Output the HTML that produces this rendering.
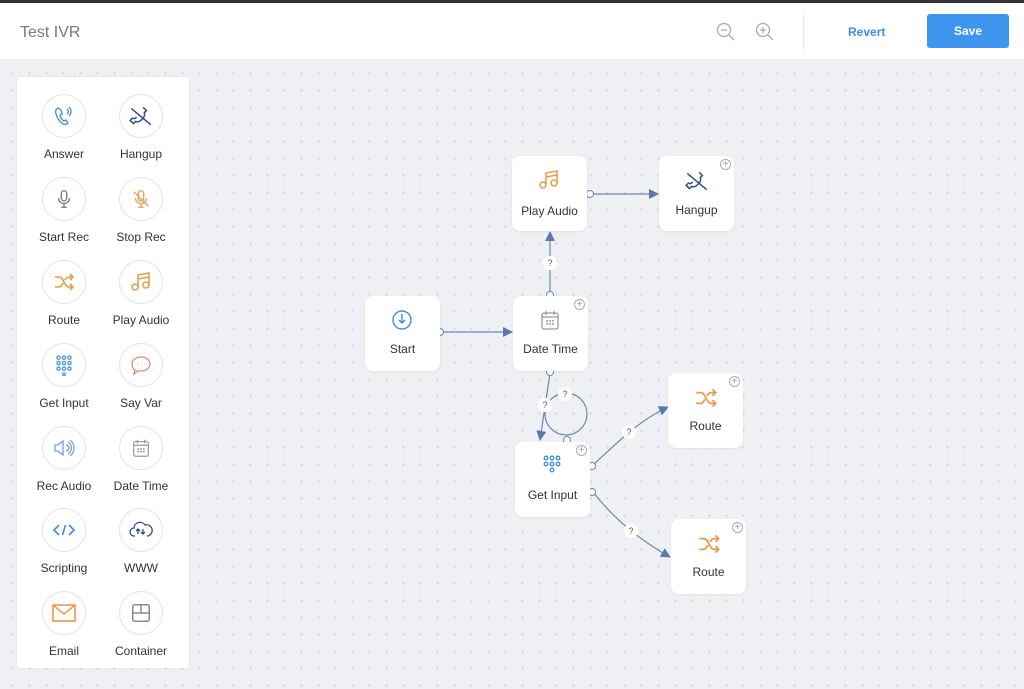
<!DOCTYPE html>
<html><head><meta charset="utf-8"><style>
*{box-sizing:border-box;margin:0;padding:0}
body{width:1024px;height:689px;overflow:hidden;font-family:"Liberation Sans",sans-serif;background:#eef0f3;position:relative}
.topbar{position:absolute;left:0;top:0;width:1024px;height:3px;background:#333}
.hdr{position:absolute;left:0;top:3px;width:1024px;height:56px;background:#fff}
.title{position:absolute;left:20px;top:21px;font-size:16px;color:#6b7a90}
.canvas{position:absolute;left:0;top:59px;width:1024px;height:630px;background-color:#eef0f3;background-image:radial-gradient(#d3d6dc 1px,transparent 1.4px);background-size:17px 17px;background-position:4px 6px}
.side{position:absolute;left:17px;top:77px;width:172px;height:591px;background:#fff;border-radius:3px;box-shadow:0 0 2px rgba(0,0,0,.08)}
.it{position:absolute;width:80px;text-align:center;font-size:12px;color:#333}
.it .c{width:44px;height:44px;border:1px solid #e3e3e3;border-radius:50%;margin:0 auto 9px;display:flex;align-items:center;justify-content:center}
.node{position:absolute;width:75px;height:75px;background:#fff;border-radius:8px;box-shadow:0 1px 3px rgba(0,0,0,.06);text-align:center;font-size:12px;color:#333}
.node svg.ic{position:absolute;left:25px;top:12px}
.node .l{position:absolute;left:0;right:0;top:46px}
.plus{position:absolute;right:3px;top:3px;width:11px;height:11px;border:1px solid #aaa;border-radius:50%;color:#999;font-size:10px;line-height:9px;text-align:center}
.btn{position:absolute;left:927px;top:14px;width:82px;height:34px;background:#3d95f0;border-radius:3px;color:#fff;font-size:12px;text-align:center;line-height:34px;font-weight:bold}
</style></head><body>
<div class="topbar"></div>
<div class="hdr">
<div class="title">Test IVR</div>
<svg style="position:absolute;left:716px;top:19px" width="20" height="20" viewBox="0 0 20 20" fill="none" stroke="#aaa" stroke-width="1.3"><circle cx="8" cy="8" r="6.5"/><path d="M5 8h6M13 13l5 5"/></svg>
<svg style="position:absolute;left:755px;top:19px" width="20" height="20" viewBox="0 0 20 20" fill="none" stroke="#aaa" stroke-width="1.3"><circle cx="8" cy="8" r="6.5"/><path d="M5 8h6M8 5v6M13 13l5 5"/></svg>
<div style="position:absolute;left:803px;top:11px;width:1px;height:36px;background:#e5e5e5"></div>
<div style="position:absolute;left:848px;top:22px;font-size:12px;color:#3d8fe0;font-weight:bold">Revert</div>
<div class="btn" style="top:11px">Save</div>
</div>
<div class="canvas"></div>

<div class="side">
<div class="it" style="left:7px;top:17px"><div class="c"><svg width="24" height="24" viewBox="0 0 24 24" fill="none" stroke="#3d8fe0" stroke-width="1.3"><path d="M6 4c-2 1-3 3-2 6 1 4 4 8 7 10 2 1 4 0 5-1l-2-3-2 1c-2-1-4-4-4-6l2-1-1-4z"/><path d="M15 5a3 3 0 0 1 0 5M17 3a6 6 0 0 1 0 9"/></svg></div>Answer</div>
<div class="it" style="left:84px;top:17px"><div class="c"><svg width="26" height="26" viewBox="0 0 24 24" fill="none" stroke="#2c4f8c" stroke-width="1.4"><path d="M14 4l3 3-2 2c1 2 0 4-2 6-2 2-4 3-6 2l-2 2-3-3 2-2c2 1 3 0 4-1"/><path d="M3 5l18 15"/></svg></div>Hangup</div>
<div class="it" style="left:7px;top:100px"><div class="c"><svg width="22" height="22" viewBox="0 0 24 24" fill="none" stroke="#6b7a90" stroke-width="1.4"><rect x="9" y="3" width="6" height="11" rx="3"/><path d="M6 11a6 6 0 0 0 12 0M12 17v4M9 21h6"/></svg></div>Start Rec</div>
<div class="it" style="left:84px;top:100px"><div class="c"><svg width="22" height="22" viewBox="0 0 24 24" fill="none" stroke="#e99a4a" stroke-width="1.4"><rect x="9" y="3" width="6" height="11" rx="3"/><path d="M6 11a6 6 0 0 0 12 0M12 17v4M9 21h6M4 4l16 16"/></svg></div>Stop Rec</div>
<div class="it" style="left:7px;top:183px"><div class="c"><svg width="24" height="24" viewBox="0 0 24 24" fill="none" stroke="#e99a4a" stroke-width="1.6"><path d="M3 7h4c5 0 5 10 10 10h3M3 17h4c2 0 3-2 4-4M13 10c1-2 2-3 4-3h3M18 4l3 3-3 3M18 14l3 3-3 3"/></svg></div>Route</div>
<div class="it" style="left:84px;top:183px"><div class="c"><svg width="24" height="24" viewBox="0 0 24 24" fill="none" stroke="#e99a4a" stroke-width="1.5"><path d="M9 17V5l11-2v12M9 9l11-2"/><circle cx="6" cy="17" r="3"/><circle cx="17" cy="15" r="3"/></svg></div>Play Audio</div>
<div class="it" style="left:7px;top:266px"><div class="c"><svg width="22" height="22" viewBox="0 0 24 24" fill="none" stroke="#3d8fe0" stroke-width="1.3"><circle cx="6" cy="4" r="1.8"/><circle cx="12" cy="4" r="1.8"/><circle cx="18" cy="4" r="1.8"/><circle cx="6" cy="10" r="1.8"/><circle cx="12" cy="10" r="1.8"/><circle cx="18" cy="10" r="1.8"/><circle cx="6" cy="16" r="1.8"/><circle cx="12" cy="16" r="1.8"/><circle cx="18" cy="16" r="1.8"/><circle cx="12" cy="22" r="1.5"/></svg></div>Get Input</div>
<div class="it" style="left:84px;top:266px"><div class="c"><svg width="24" height="24" viewBox="0 0 24 24" fill="none" stroke="#e8867a" stroke-width="1.3"><path d="M12 4c5 0 9 3 9 7s-4 7-9 7c-1 0-2 0-3-.3L5 21l1-4c-2-1-3-3-3-6 0-4 4-7 9-7z"/><path d="M8 11h.5M12 11h.5M16 11h.5"/></svg></div>Say Var</div>
<div class="it" style="left:7px;top:349px"><div class="c"><svg width="24" height="24" viewBox="0 0 24 24" fill="none" stroke="#7a9ed8" stroke-width="1.3"><path d="M3 9h3l5-4v14l-5-4H3z"/><path d="M14 9a3 3 0 0 1 0 6M16 6a7 7 0 0 1 0 12M18 4a10 10 0 0 1 0 16"/></svg></div>Rec Audio</div>
<div class="it" style="left:84px;top:349px"><div class="c"><svg width="22" height="22" viewBox="0 0 24 24" fill="none" stroke="#999" stroke-width="1.3"><rect x="4" y="5" width="16" height="16" rx="2"/><path d="M4 9h16M8 3v4M16 3v4"/><path d="M8 13h2M11 13h2M14 13h2M8 16h2M11 16h2M14 16h2" stroke-width="1.6"/></svg></div>Date Time</div>
<div class="it" style="left:7px;top:431px"><div class="c"><svg width="24" height="24" viewBox="0 0 24 24" fill="none" stroke="#3d8fe0" stroke-width="1.6"><path d="M7 7l-5 5 5 5M17 7l5 5-5 5M13.5 7l-3 10"/></svg></div>Scripting</div>
<div class="it" style="left:84px;top:431px"><div class="c"><svg width="26" height="26" viewBox="0 0 26 26" fill="none" stroke="#2c4f8c" stroke-width="1.3"><path d="M7 19H6a4 4 0 0 1 0-8 6 6 0 0 1 11-3 5 5 0 0 1 3 11h-1"/><path d="M10 17v-5M8 14l2-2 2 2M15 12v5M13 15l2 2 2-2"/></svg></div>WWW</div>
<div class="it" style="left:7px;top:514px"><div class="c"><svg width="26" height="22" viewBox="0 0 26 22" fill="none" stroke="#e99a4a" stroke-width="1.6"><rect x="2" y="3" width="22" height="16"/><path d="M2 3l11 9 11-9"/></svg></div>Email</div>
<div class="it" style="left:84px;top:514px"><div class="c"><svg width="22" height="22" viewBox="0 0 24 24" fill="none" stroke="#6b7a90" stroke-width="1.4"><rect x="3" y="3" width="18" height="18" rx="2"/><path d="M3 12h18M12 3v9"/></svg></div>Container</div>
</div>

<svg style="position:absolute;left:0;top:0" width="1024" height="689" fill="none">
<defs><marker id="a" markerWidth="10" markerHeight="10" refX="9" refY="5" orient="auto" markerUnits="userSpaceOnUse"><path d="M0 0L10 5 0 10z" fill="#5b78a8"/></marker></defs>
<g stroke="#6f87b0" stroke-width="1.2">
<path d="M440 332H512" marker-end="url(#a)"/>
<path d="M591 194H658" marker-end="url(#a)"/>
<path d="M550 294V232" marker-end="url(#a)"/>
<path d="M550 373L540 440" marker-end="url(#a)"/>
<circle cx="566" cy="414" r="21"/>
<path d="M593 465C620 440 640 420 668 407" marker-end="url(#a)"/>
<path d="M593 492C615 520 640 540 670 557" marker-end="url(#a)"/>
</g>
<g fill="#fff" stroke="#6f87b0" stroke-width="1"><circle cx="440" cy="332" r="3.5"/><circle cx="590" cy="194" r="3.5"/><circle cx="550" cy="295" r="3.5"/><circle cx="550" cy="372" r="3.5"/><circle cx="567" cy="440" r="3.5"/><circle cx="592" cy="466" r="3.5"/><circle cx="592" cy="492" r="3.5"/></g>
<g fill="#fff"><circle cx="550" cy="263" r="7"/><circle cx="545" cy="405" r="7"/><circle cx="565" cy="394" r="7"/><circle cx="629" cy="432" r="7"/><circle cx="631" cy="531" r="7"/></g>
<g fill="#555" font-size="9" font-family="Liberation Sans" text-anchor="middle"><text x="550" y="266">?</text><text x="545" y="408">?</text><text x="565" y="397">?</text><text x="629" y="435">?</text><text x="631" y="534">?</text></g>
</svg>

<div class="node" style="left:512px;top:156px"><svg class="ic" width="24" height="24" viewBox="0 0 24 24" fill="none" stroke="#e99a4a" stroke-width="1.5"><path d="M9 17V5l11-2v12M9 9l11-2"/><circle cx="6" cy="17" r="3"/><circle cx="17" cy="15" r="3"/></svg><div class="l" style="top:48px">Play Audio</div></div>
<div class="node" style="left:659px;top:156px"><div class="plus">+</div><svg class="ic" width="26" height="26" viewBox="0 0 24 24" fill="none" stroke="#2c4f8c" stroke-width="1.4"><path d="M14 4l3 3-2 2c1 2 0 4-2 6-2 2-4 3-6 2l-2 2-3-3 2-2c2 1 3 0 4-1"/><path d="M3 5l18 15"/></svg><div class="l" style="top:47px">Hangup</div></div>
<div class="node" style="left:365px;top:296px"><svg class="ic" width="24" height="24" viewBox="0 0 24 24" fill="none" stroke="#3d8fe0" stroke-width="1.4"><circle cx="12" cy="12" r="9"/><path d="M12 6v8M9 12l3 3 3-3"/></svg><div class="l">Start</div></div>
<div class="node" style="left:513px;top:296px"><div class="plus">+</div><svg class="ic" width="24" height="24" viewBox="0 0 24 24" fill="none" stroke="#999" stroke-width="1.3"><rect x="4" y="5" width="16" height="16" rx="2"/><path d="M4 9h16M8 3v4M16 3v4"/><path d="M8 13h2M11 13h2M14 13h2M8 16h2M11 16h2M14 16h2" stroke-width="1.6"/></svg><div class="l">Date Time</div></div>
<div class="node" style="left:668px;top:373px"><div class="plus">+</div><svg class="ic" width="26" height="26" viewBox="0 0 24 24" fill="none" stroke="#e99a4a" stroke-width="1.6"><path d="M3 7h4c5 0 5 10 10 10h3M3 17h4c2 0 3-2 4-4M13 10c1-2 2-3 4-3h3M18 4l3 3-3 3M18 14l3 3-3 3"/></svg><div class="l">Route</div></div>
<div class="node" style="left:515px;top:442px"><div class="plus">+</div><svg class="ic" width="24" height="24" viewBox="0 0 24 24" fill="none" stroke="#3d8fe0" stroke-width="1.3"><circle cx="6" cy="4" r="1.8"/><circle cx="12" cy="4" r="1.8"/><circle cx="18" cy="4" r="1.8"/><circle cx="6" cy="10" r="1.8"/><circle cx="12" cy="10" r="1.8"/><circle cx="18" cy="10" r="1.8"/><circle cx="12" cy="16" r="1.8"/></svg><div class="l">Get Input</div></div>
<div class="node" style="left:671px;top:519px"><div class="plus">+</div><svg class="ic" width="26" height="26" viewBox="0 0 24 24" fill="none" stroke="#e99a4a" stroke-width="1.6"><path d="M3 7h4c5 0 5 10 10 10h3M3 17h4c2 0 3-2 4-4M13 10c1-2 2-3 4-3h3M18 4l3 3-3 3M18 14l3 3-3 3"/></svg><div class="l">Route</div></div>
</body></html>
